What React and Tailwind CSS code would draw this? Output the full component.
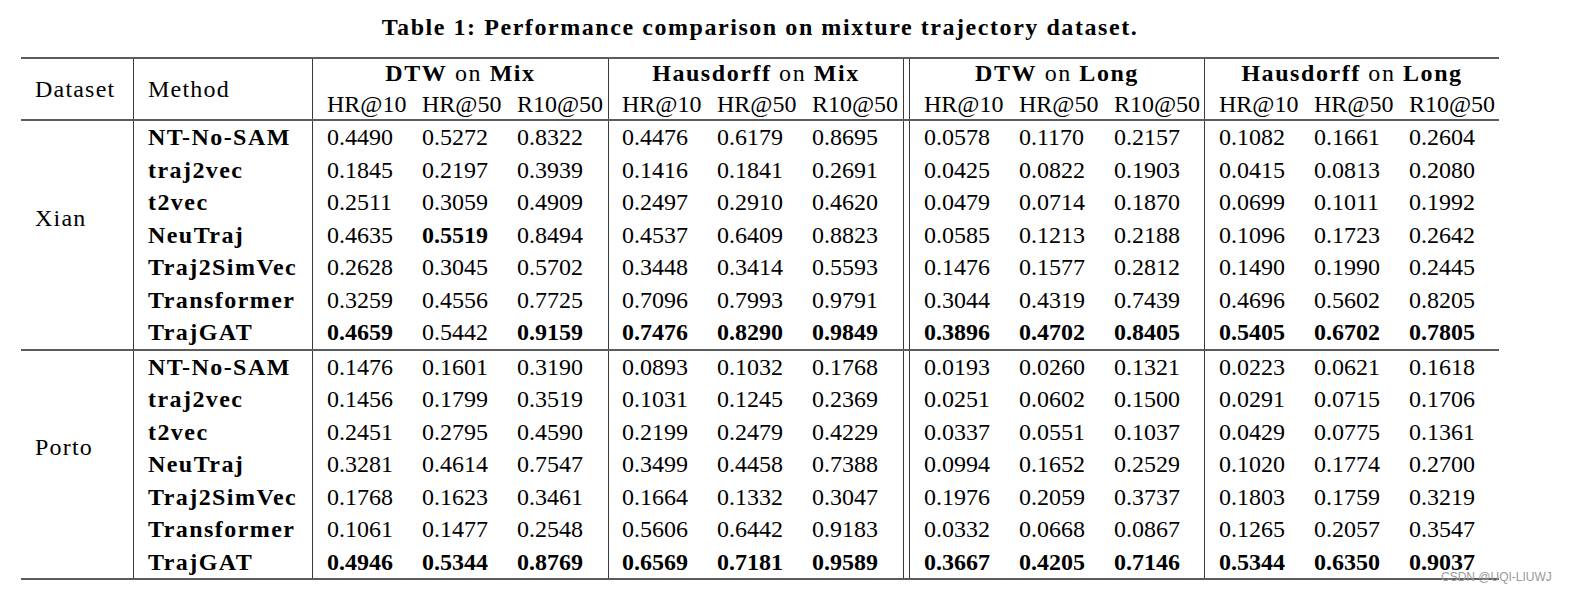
import React from "react";

const methods = ["NT-No-SAM", "traj2vec", "t2vec", "NeuTraj", "Traj2SimVec", "Transformer", "TrajGAT"];

const xian = [
  ["0.4490", "0.5272", "0.8322", "0.4476", "0.6179", "0.8695", "0.0578", "0.1170", "0.2157", "0.1082", "0.1661", "0.2604"],
  ["0.1845", "0.2197", "0.3939", "0.1416", "0.1841", "0.2691", "0.0425", "0.0822", "0.1903", "0.0415", "0.0813", "0.2080"],
  ["0.2511", "0.3059", "0.4909", "0.2497", "0.2910", "0.4620", "0.0479", "0.0714", "0.1870", "0.0699", "0.1011", "0.1992"],
  ["0.4635", "*0.5519", "0.8494", "0.4537", "0.6409", "0.8823", "0.0585", "0.1213", "0.2188", "0.1096", "0.1723", "0.2642"],
  ["0.2628", "0.3045", "0.5702", "0.3448", "0.3414", "0.5593", "0.1476", "0.1577", "0.2812", "0.1490", "0.1990", "0.2445"],
  ["0.3259", "0.4556", "0.7725", "0.7096", "0.7993", "0.9791", "0.3044", "0.4319", "0.7439", "0.4696", "0.5602", "0.8205"],
  ["*0.4659", "0.5442", "*0.9159", "*0.7476", "*0.8290", "*0.9849", "*0.3896", "*0.4702", "*0.8405", "*0.5405", "*0.6702", "*0.7805"],
];

const porto = [
  ["0.1476", "0.1601", "0.3190", "0.0893", "0.1032", "0.1768", "0.0193", "0.0260", "0.1321", "0.0223", "0.0621", "0.1618"],
  ["0.1456", "0.1799", "0.3519", "0.1031", "0.1245", "0.2369", "0.0251", "0.0602", "0.1500", "0.0291", "0.0715", "0.1706"],
  ["0.2451", "0.2795", "0.4590", "0.2199", "0.2479", "0.4229", "0.0337", "0.0551", "0.1037", "0.0429", "0.0775", "0.1361"],
  ["0.3281", "0.4614", "0.7547", "0.3499", "0.4458", "0.7388", "0.0994", "0.1652", "0.2529", "0.1020", "0.1774", "0.2700"],
  ["0.1768", "0.1623", "0.3461", "0.1664", "0.1332", "0.3047", "0.1976", "0.2059", "0.3737", "0.1803", "0.1759", "0.3219"],
  ["0.1061", "0.1477", "0.2548", "0.5606", "0.6442", "0.9183", "0.0332", "0.0668", "0.0867", "0.1265", "0.2057", "0.3547"],
  ["*0.4946", "*0.5344", "*0.8769", "*0.6569", "*0.7181", "*0.9589", "*0.3667", "*0.4205", "*0.7146", "*0.5344", "*0.6350", "*0.9037"],
];

function Val({ v }) {
  const bold = v.startsWith("*");
  return <span className={bold ? "font-bold" : ""}>{bold ? v.slice(1) : v}</span>;
}

function Three({ items, pad = "pl-[14px]" }) {
  return (
    <>
      <div className={`w-[95px] shrink-0 ${pad}`}>{items[0]}</div>
      <div className={`w-[95px] shrink-0 ${pad}`}>{items[1]}</div>
      <div className={`flex-1 ${pad}`}>{items[2]}</div>
    </>
  );
}

function GroupsRow({ cells }) {
  return (
    <>
      <div className="w-[296px] shrink-0 flex items-center border-l border-[#3a3a3a]">
        <Three items={cells[0]} />
      </div>
      <div className="w-[296px] shrink-0 flex items-center border-l border-r border-[#3a3a3a]">
        <Three items={cells[1]} pad="pl-[13px]" />
      </div>
      <div className="w-[5px] shrink-0" />
      <div className="w-[295px] shrink-0 flex items-center border-l border-[#3a3a3a]">
        <Three items={cells[2]} />
      </div>
      <div className="w-[295px] shrink-0 flex items-center border-l border-[#3a3a3a]">
        <Three items={cells[3]} />
      </div>
    </>
  );
}

function Block({ name, rows }) {
  return (
    <div className="flex">
      <div className="w-[112px] shrink-0 flex items-center pl-[14px] pb-[34px] tracking-[0.05em]">{name}</div>
      <div className="flex flex-col">
        {rows.map((r, i) => {
          const vals = r.map((v, j) => <Val key={j} v={v} />);
          const cells = [vals.slice(0, 3), vals.slice(3, 6), vals.slice(6, 9), vals.slice(9, 12)];
          return (
            <div key={i} className="flex h-[32.5px] leading-[32.5px]">
              <div className="w-[179px] shrink-0 border-l border-[#3a3a3a] pl-[14px] font-bold tracking-[0.06em]">
                {methods[i]}
              </div>
              <GroupsRow cells={cells} />
            </div>
          );
        })}
      </div>
    </div>
  );
}

function GroupHead({ a, b, w, second = false }) {
  return (
    <div className={`${w} shrink-0 flex flex-col border-l border-[#3a3a3a] ${second ? "border-r" : ""}`}>
      <div className="h-[28px] leading-[28px] text-center tracking-[0.065em]">
        <span className="font-bold">{a}</span> on <span className="font-bold">{b}</span>
      </div>
      <div className="h-[34px] leading-[34px] flex">
        <Three items={["HR@10", "HR@50", "R10@50"]} pad={second ? "pl-[13px]" : "pl-[14px]"} />
      </div>
    </div>
  );
}

export default function App() {
  return (
    <div className="relative w-[1580px] h-[596px] bg-white text-black [font-family:'Liberation_Serif','Times_New_Roman',serif] text-[24px] overflow-hidden">
      <div className="ml-[21px] w-[1478px]">
        <div className="h-[57px] flex items-center justify-center pb-[3px] font-bold tracking-[0.065em]">
          Table 1: Performance comparison on mixture trajectory dataset.
        </div>
        <div className="border-t-2 border-b-2 border-[#5c5c5c]">
          <div className="flex h-[62px] border-b-2 border-[#5c5c5c]">
            <div className="w-[112px] shrink-0 flex items-center pl-[14px] tracking-[0.05em]">Dataset</div>
            <div className="w-[179px] shrink-0 flex items-center pl-[14px] border-l border-[#3a3a3a] tracking-[0.05em]">
              Method
            </div>
            <GroupHead a="DTW" b="Mix" w="w-[296px]" />
            <GroupHead a="Hausdorff" b="Mix" w="w-[296px]" second />
            <div className="w-[5px] shrink-0" />
            <GroupHead a="DTW" b="Long" w="w-[295px]" />
            <GroupHead a="Hausdorff" b="Long" w="w-[295px]" />
          </div>
          <div className="border-b-2 border-[#5c5c5c]">
            <Block name="Xian" rows={xian} />
          </div>
          <Block name="Porto" rows={porto} />
        </div>
      </div>
      <div className="absolute left-[1441px] top-[571px] text-[12px] leading-[12px] text-[#9a9a9a] [font-family:'Liberation_Sans',Arial,sans-serif]">
        CSDN @UQI-LIUWJ
      </div>
    </div>
  );
}
